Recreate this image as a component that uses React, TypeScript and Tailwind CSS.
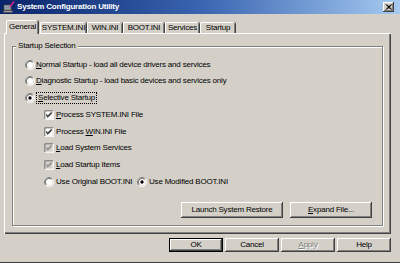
import React from "react";

const raised =
  "bg-[#d4d0c8] shadow-[inset_-1px_-1px_0_#404040,inset_1px_1px_0_#ffffff,inset_-2px_-2px_0_#808080]";

function Radio({ checked }: { checked?: boolean }) {
  return (
    <svg width="10" height="10" viewBox="0 0 12 12" className="shrink-0">
      <circle cx="6" cy="6" r="5.5" fill="#ffffff" />
      <path d="M2.11 9.89 A5.5 5.5 0 0 1 9.89 2.11" fill="none" stroke="#808080" strokeWidth="1" />
      <path d="M9.89 2.11 A5.5 5.5 0 0 1 2.11 9.89" fill="none" stroke="#ffffff" strokeWidth="1" />
      <path d="M2.82 9.18 A4.5 4.5 0 0 1 9.18 2.82" fill="none" stroke="#404040" strokeWidth="1" />
      <path d="M9.18 2.82 A4.5 4.5 0 0 1 2.82 9.18" fill="none" stroke="#d4d0c8" strokeWidth="1" />
      {checked && <circle cx="6" cy="6" r="2" fill="#000000" />}
    </svg>
  );
}

function Check({ disabled }: { disabled?: boolean }) {
  return (
    <svg width="10" height="10" viewBox="0 0 13 13" className="shrink-0">
      <rect x="0" y="0" width="13" height="13" fill="#ffffff" />
      <path d="M0.5 12.5 V0.5 H12.5" fill="none" stroke="#808080" />
      <path d="M1.5 11.5 V1.5 H11.5" fill="none" stroke="#404040" />
      <path d="M1.5 11.5 H11.5 V1.5" fill="none" stroke="#d4d0c8" />
      <rect x="2" y="2" width="9" height="9" fill={disabled ? "#d4d0c8" : "#ffffff"} />
      <path
        d="M3 5.5 L5 7.5 L10 2.5 M3 6.5 L5 8.5 L10 3.5 M3 7.5 L5 9.5 L10 4.5"
        fill="none"
        stroke={disabled ? "#808080" : "#000000"}
        strokeWidth="1"
      />
    </svg>
  );
}

function Tab({ label, w, selected, ml }: { label: string; w: string; selected?: boolean; ml: string }) {
  return (
    <div
      className={
        selected
          ? `${ml} ${w} h-[14px] -mb-px relative z-10 bg-[#d4d0c8] border-t border-l border-white rounded-tl-[2px] rounded-tr-[2px] shadow-[inset_-1px_0_0_#808080,1px_0_0_#404040] flex items-center justify-center pb-[1px]`
          : `${ml} ${w} h-[11px] bg-[#d4d0c8] border-t border-l border-white rounded-tl-[2px] rounded-tr-[2px] shadow-[inset_-1px_0_0_#808080,1px_0_0_#404040] flex items-center justify-center`
      }
    >
      {label}
    </div>
  );
}

export default function App() {
  return (
    <div className="w-[400px] h-[266px] bg-white overflow-hidden font-['Liberation_Sans',Arial,sans-serif] text-[8px] tracking-[-0.2px] text-black leading-none">
      <div className="h-[263px] bg-[#d4d0c8] border-b border-[#404040] flex flex-col">
        {/* Title bar */}
        <div className="h-[14px] bg-linear-to-r from-[#0a246a] via-[#3a64b0] to-[#a6caf0] flex items-center pl-[3px] pr-[6px]">
          <svg width="12" height="12" viewBox="0 0 12 12" className="shrink-0">
            <rect x="1" y="4" width="7" height="5" fill="#c0c0c0" stroke="#404040" strokeWidth="0.8" />
            <rect x="2.2" y="5.2" width="4.6" height="2.6" fill="#8090a0" />
            <rect x="0.5" y="9.5" width="9" height="2" fill="#a0a0a0" stroke="#404040" strokeWidth="0.6" />
            <path d="M7 6 L11 0.5" stroke="#e0208a" strokeWidth="1.4" />
          </svg>
          <span className="ml-[2px] text-white font-bold text-[8px] tracking-[-0.2px]">System Configuration Utility</span>
          <div className={`ml-auto w-[11px] h-[10px] ${raised} flex items-center justify-center`}>
            <svg width="7" height="6" viewBox="0 0 7 6">
              <path d="M1 0.5 L6 5.5 M6 0.5 L1 5.5 M1.8 0.5 L6.8 5.5 M6.8 0.5 L1.8 5.5" stroke="#000" strokeWidth="1" />
            </svg>
          </div>
        </div>

        {/* Tabs */}
        <div className="mt-[6px] h-[13px] flex items-end">
          <Tab label="General" w="w-[32px]" ml="ml-[6px]" selected />
          <Tab label="SYSTEM.INI" w="w-[46px]" ml="ml-[2px]" />
          <Tab label="WIN.INI" w="w-[35px]" ml="ml-[1px]" />
          <Tab label="BOOT.INI" w="w-[41px]" ml="ml-[1px]" />
          <Tab label="Services" w="w-[34px]" ml="ml-[1px]" />
          <Tab label="Startup" w="w-[35px]" ml="ml-[1px]" />
        </div>

        {/* Panel */}
        <div className="ml-[4px] w-[387px] h-[201px] bg-[#d4d0c8] shadow-[inset_1px_1px_0_#ffffff,inset_-1px_-1px_0_#404040,inset_-2px_-2px_0_#808080] pt-[13px] pl-[8px]">
          <div className="relative w-[371px] h-[180px] border border-[#808080] shadow-[1px_1px_0_#ffffff,inset_1px_1px_0_#ffffff] pt-[9px] pl-[12px] flex flex-col">
            <span className="absolute left-[3px] top-[-5px] bg-[#d4d0c8] px-[2px]">Startup Selection</span>

            <div className="h-[17px] flex items-center gap-[1px]">
              <Radio />
              <span>
                <u>N</u>ormal Startup - load all device drivers and services
              </span>
            </div>
            <div className="h-[16px] flex items-center gap-[1px]">
              <Radio />
              <span>
                <u>D</u>iagnostic Startup - load basic devices and services only
              </span>
            </div>
            <div className="h-[17px] flex items-center gap-[1px]">
              <Radio checked />
              <span className="border border-dotted border-black px-[1px] py-[1px]">
                <u>S</u>elective Startup
              </span>
            </div>
            <div className="h-[17px] flex items-center gap-[2px] pl-[19px]">
              <Check />
              <span>
                <u>P</u>rocess SYSTEM.INI File
              </span>
            </div>
            <div className="h-[17px] flex items-center gap-[2px] pl-[19px]">
              <Check />
              <span>
                Process <u>W</u>IN.INI File
              </span>
            </div>
            <div className="h-[16px] flex items-center gap-[2px] pl-[19px]">
              <Check disabled />
              <span>
                <u>L</u>oad System Services
              </span>
            </div>
            <div className="h-[17px] flex items-center gap-[2px] pl-[19px]">
              <Check disabled />
              <span>
                <u>L</u>oad Startup Items
              </span>
            </div>
            <div className="h-[17px] flex items-center pl-[19px]">
              <Radio />
              <span className="ml-[2px] w-[81px]">Use Original BOOT.INI</span>
              <Radio checked />
              <span className="ml-[2px]">Use Modified BOOT.INI</span>
            </div>

            <div className="mt-[12px] flex justify-end pr-[10px] gap-[7px]">
              <div className={`w-[102px] h-[16px] ${raised} flex items-center justify-center`}>Launch System Restore</div>
              <div className={`w-[82px] h-[16px] ${raised} flex items-center justify-center`}>
                <span>
                  <u>E</u>xpand File...
                </span>
              </div>
            </div>
          </div>
        </div>

        {/* Bottom buttons */}
        <div className="mt-[4px] flex justify-end pr-[9px] gap-[2px]">
          <div className="w-[54px] h-[14px] border border-black bg-[#d4d0c8] shadow-[inset_-1px_-1px_0_#404040,inset_1px_1px_0_#ffffff,inset_-2px_-2px_0_#808080] flex items-center justify-center">
            OK
          </div>
          <div className={`w-[54px] h-[14px] ${raised} flex items-center justify-center`}>Cancel</div>
          <div className={`w-[54px] h-[14px] ${raised} flex items-center justify-center text-[#808080] [text-shadow:1px_1px_0_#ffffff]`}>
            <span>
              <u>A</u>pply
            </span>
          </div>
          <div className={`w-[54px] h-[14px] ${raised} flex items-center justify-center`}>Help</div>
        </div>
      </div>
    </div>
  );
}
